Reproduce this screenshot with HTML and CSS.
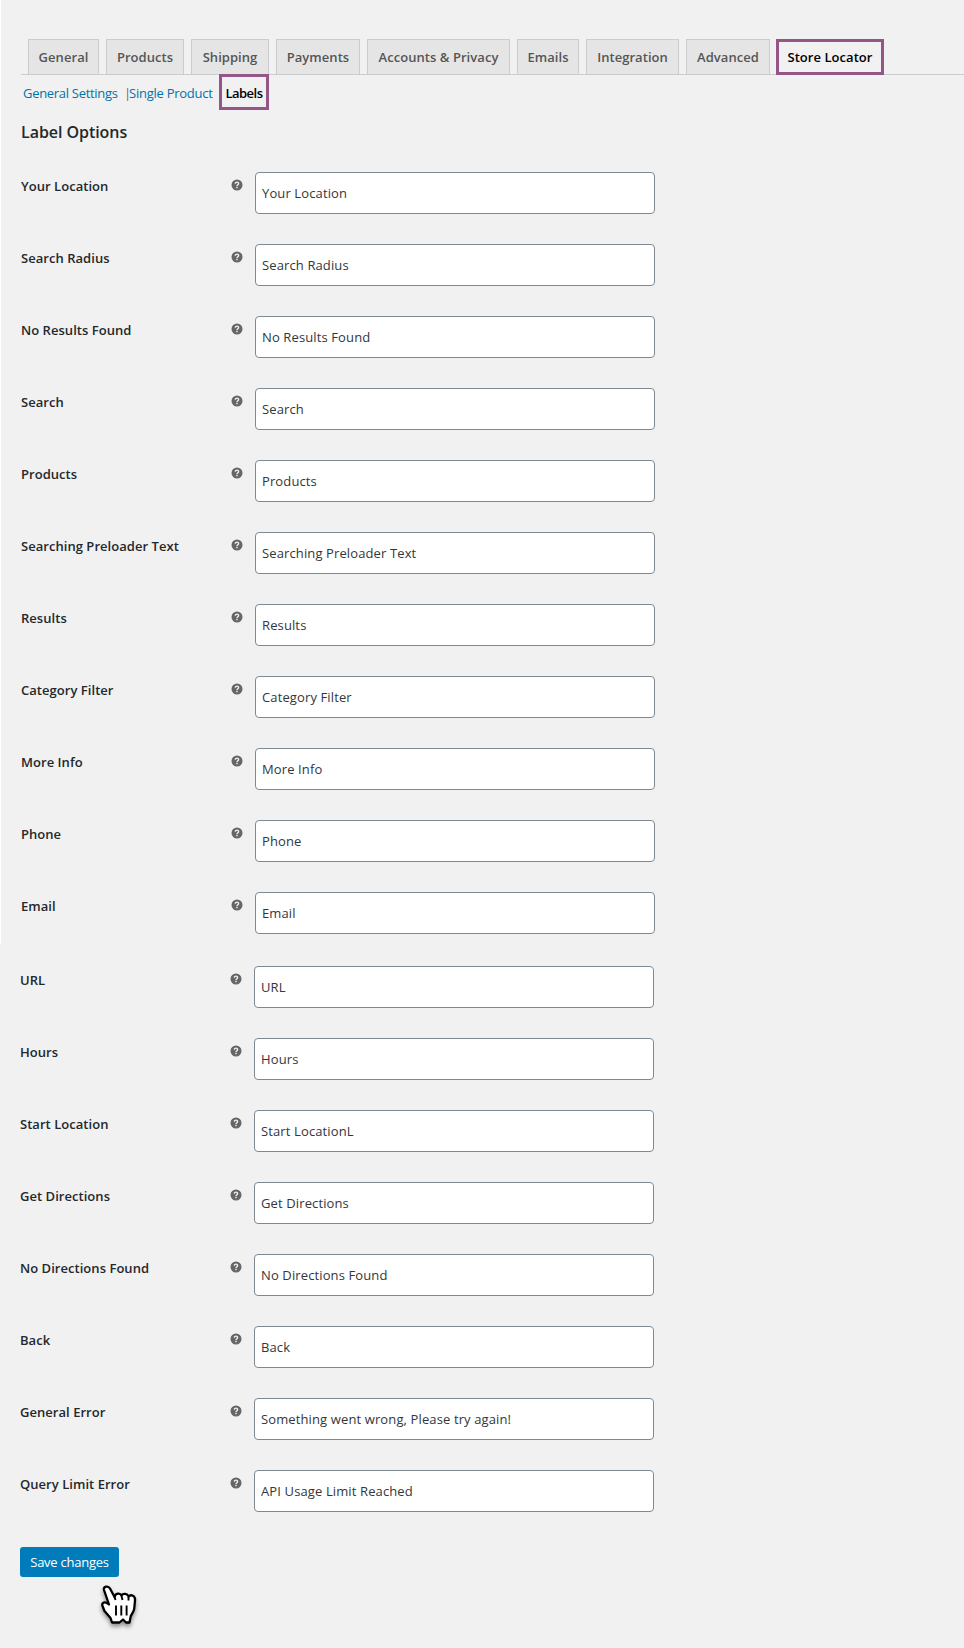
FILE: index.html
```html
<!DOCTYPE html>
<html lang="en">
<head>
  <meta charset="UTF-8" />
  <meta name="viewport" content="width=device-width, initial-scale=1.0"/>
  <title>Store Locator Settings</title>
  <link rel="stylesheet" href="styles.css">
</head>
<body>

<svg width="0" height="0" class="sprite">
  <symbol id="help" viewBox="0 0 12 12">
    <circle cx="6" cy="6" r="5.5" fill="#666" />
    <path d="M4.3 4.7C4.4 2.6 7.7 2.6 7.6 4.6C7.5 5.8 6 5.7 6 7.2M6 8.1V9.3" fill="none" stroke="#f1f1f1" stroke-width="1.4" />
  </symbol>
</svg>

<nav class="tabs">
  <a class="tab general">General</a>
  <a class="tab products">Products</a>
  <a class="tab shipping">Shipping</a>
  <a class="tab payments">Payments</a>
  <a class="tab accounts">Accounts &amp; Privacy</a>
  <a class="tab emails">Emails</a>
  <a class="tab integration">Integration</a>
  <a class="tab advanced">Advanced</a>
  <a class="tab active">Store Locator</a>
</nav>

<div class="subnav">
  <a class="sub-general">General Settings</a>
  <span class="sep">|</span>
  <a class="sub-single">Single Product</a>
  <a class="current">Labels</a>
</div>

<h2>Label Options</h2>

<form class="settings">
  <div class="group">
    <div class="row"><label>Your Location</label><svg class="help"><use href="#help" /></svg><input type="text" value="Your Location" /></div>
    <div class="row"><label>Search Radius</label><svg class="help"><use href="#help" /></svg><input type="text" value="Search Radius" /></div>
    <div class="row"><label>No Results Found</label><svg class="help"><use href="#help" /></svg><input type="text" value="No Results Found" /></div>
    <div class="row"><label>Search</label><svg class="help"><use href="#help" /></svg><input type="text" value="Search" /></div>
    <div class="row"><label>Products</label><svg class="help"><use href="#help" /></svg><input type="text" value="Products" /></div>
    <div class="row"><label>Searching Preloader Text</label><svg class="help"><use href="#help" /></svg><input type="text" value="Searching Preloader Text" /></div>
    <div class="row"><label>Results</label><svg class="help"><use href="#help" /></svg><input type="text" value="Results" /></div>
    <div class="row"><label>Category Filter</label><svg class="help"><use href="#help" /></svg><input type="text" value="Category Filter" /></div>
    <div class="row"><label>More Info</label><svg class="help"><use href="#help" /></svg><input type="text" value="More Info" /></div>
    <div class="row"><label>Phone</label><svg class="help"><use href="#help" /></svg><input type="text" value="Phone" /></div>
    <div class="row"><label>Email</label><svg class="help"><use href="#help" /></svg><input type="text" value="Email" /></div>
  </div>
  <div class="group group-more">
    <div class="row"><label>URL</label><svg class="help"><use href="#help" /></svg><input type="text" value="URL" /></div>
    <div class="row"><label>Hours</label><svg class="help"><use href="#help" /></svg><input type="text" value="Hours" /></div>
    <div class="row"><label>Start Location</label><svg class="help"><use href="#help" /></svg><input type="text" value="Start LocationL" /></div>
    <div class="row"><label>Get Directions</label><svg class="help"><use href="#help" /></svg><input type="text" value="Get Directions" /></div>
    <div class="row"><label>No Directions Found</label><svg class="help"><use href="#help" /></svg><input type="text" value="No Directions Found" /></div>
    <div class="row"><label>Back</label><svg class="help"><use href="#help" /></svg><input type="text" value="Back" /></div>
    <div class="row"><label>General Error</label><svg class="help"><use href="#help" /></svg><input type="text" value="Something went wrong, Please try again!" /></div>
    <div class="row"><label>Query Limit Error</label><svg class="help"><use href="#help" /></svg><input type="text" value="API Usage Limit Reached" /></div>
  </div>
  <button class="button" type="button">Save changes</button>
</form>

<svg class="pointer" viewBox="0 0 36 40">
  <path d="M3 5C2.200 1.500 7 .2 9 3.500L13.500 12C14.500 8 19 7.500 20.500 10.500C22 8 26.500 8.500 27.500 11.500C30 9 34.500 10.500 34 15.500L33.200 24C32.500 27 31 29 29.800 31L28.500 37.500H25L22 34.500L18.500 37.500H11L9.500 33L3.500 26L1.300 20.500C.8 16.500 5 16.500 8 19.500Z" fill="#fff" stroke="#000" stroke-width="2.300" stroke-linejoin="round" />
  <path d="M13.500 12L14.500 15M20.500 11L21.500 15M27.500 12L27.500 15.500M15 20.500V30.500M20.300 20.500V30.500M25.600 20.500V30.500" fill="none" stroke="#000" stroke-width="1.900" />
</svg>

</body>
</html>
```
FILE: styles.css
```css
* { box-sizing: border-box; }
body { position: relative; margin: 0; height: 1648px; overflow: hidden; background: #f1f1f1; color: #23282d; font-family: "Open Sans", "Noto Sans", sans-serif; font-size: 13px; }
body::before { content: ""; position: absolute; left: 0; top: 0; width: 1px; height: 944px; background: #fff; }
.sprite { position: absolute; }

.tabs { display: flex; gap: 7px; height: 75px; margin-left: 21px; padding: 39px 0 0 7px; border-bottom: 1px solid #ccc; }
.tab { flex: none; height: 36px; border: 1px solid #ccc; background: #e5e5e5; color: #555; font-weight: 600; line-height: 35px; text-align: center; white-space: nowrap; letter-spacing: 0.05px; }
.general { width: 71px; }
.products, .shipping { width: 78px; }
.payments { width: 84px; }
.accounts { width: 143px; }
.emails { width: 62px; }
.integration { width: 93px; }
.advanced { width: 84px; }
.active { width: 108px; margin-left: -1px; border: 3px solid #935687; background: #f1f1f1; color: #000; line-height: 31px; }

.subnav { display: flex; height: 35px; padding-left: 23px; line-height: 37px; color: #666; white-space: nowrap; }
.subnav a { color: #0073aa; letter-spacing: -0.25px; }
.sub-general { width: 101px; }
.subnav .sub-general { letter-spacing: -0.3px; }
.sep { width: 5px; }
.sub-single { width: 90px; }
.subnav .current { width: 50px; height: 36px; margin-top: -1px; border: 3px solid #935687; color: #000; font-weight: 600; line-height: 33px; text-align: center; letter-spacing: -0.5px; }

h2 { margin: 0; padding: 10px 0 0 21px; height: 62px; font-size: 16px; font-weight: 600; line-height: 24px; letter-spacing: -0.05px; }

.group { padding-left: 21px; }
.group-more { padding: 2px 0 0 20px; }
.row { display: flex; align-items: flex-start; height: 72px; }
.row label { width: 210px; padding-top: 4px; font-weight: 600; line-height: 20px; letter-spacing: 0.04px; }
.help { flex: none; width: 12px; height: 12px; margin: 7px 12px 0 0; }
.row input { width: 400px; height: 42px; padding: 0 6px; border: 1px solid #7e8993; border-radius: 4px; background: #fff; color: #32373c; font-family: inherit; font-size: 13px; letter-spacing: 0.12px; }
.button { display: block; width: 99px; height: 30px; margin: 5px 0 0 20px; padding: 0; border: none; border-radius: 3px; background: #007cba; color: #fff; font-family: inherit; font-size: 13px; letter-spacing: -0.25px; }
.pointer { position: absolute; left: 101px; top: 1585px; width: 36px; height: 40px; overflow: visible; filter: drop-shadow(0 3px 2px rgba(0,0,0,0.4)); }
```
